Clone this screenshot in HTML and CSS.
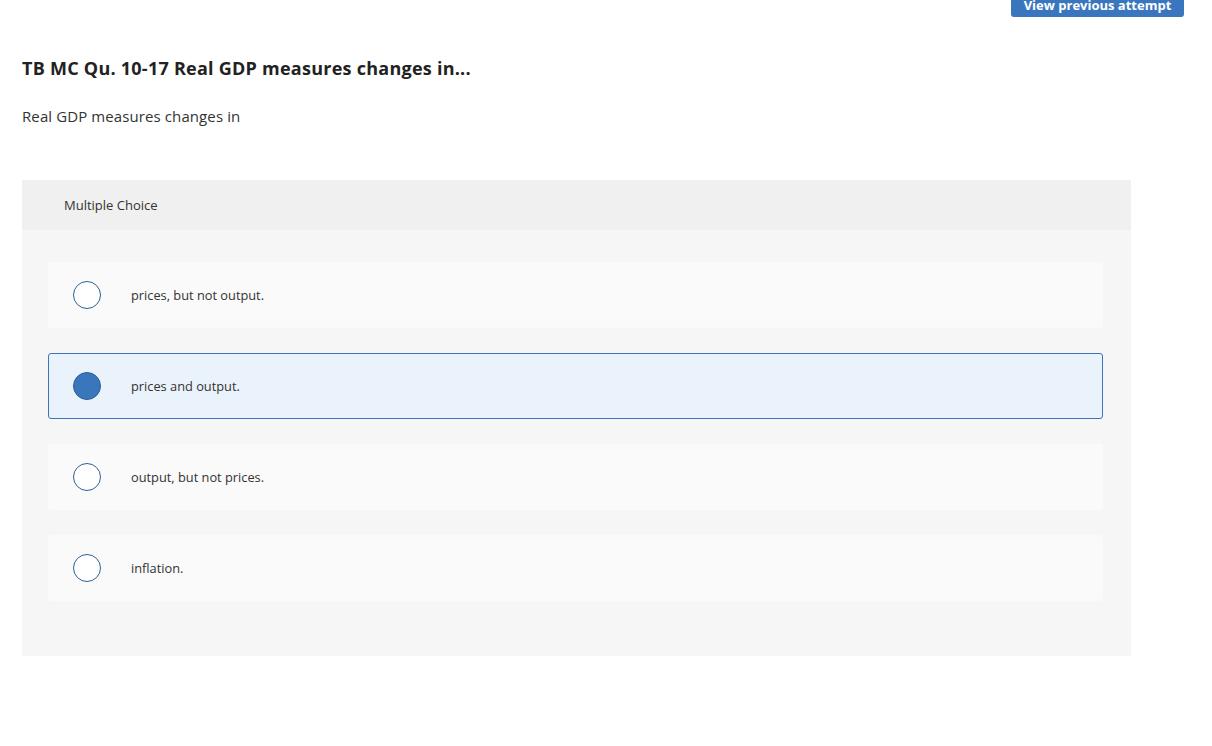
FILE: index.html
```html
<!DOCTYPE html>
<html>
<head>
<meta charset="utf-8">
<link rel="stylesheet" href="styles.css">
</head>
<body>
<div class="page">
  <div class="topbar">
    <button class="btn-prev">View previous attempt</button>
  </div>
  <h1 class="title">TB MC Qu. 10-17 Real GDP measures changes in...</h1>
  <p class="prompt">Real GDP measures changes in</p>
  <div class="panel">
    <div class="panel-head">Multiple Choice</div>
    <div class="panel-body">
      <div class="option"><span class="radio"></span><span class="label">prices, but not output.</span></div>
      <div class="option selected"><span class="radio"></span><span class="label">prices and output.</span></div>
      <div class="option"><span class="radio"></span><span class="label">output, but not prices.</span></div>
      <div class="option"><span class="radio"></span><span class="label">inflation.</span></div>
    </div>
  </div>
</div>
</body>
</html>
```
FILE: styles.css
```css
* { box-sizing: border-box; }
html, body { margin: 0; padding: 0; background: #fff; }
body { font-family: "Open Sans", "Liberation Sans", sans-serif; color: #333; }
.page { padding: 0 28px 0 22px; width: 1212px; }
.topbar { display: flex; justify-content: flex-end; align-items: flex-end; height: 17px; overflow: hidden; }
.btn-prev {
  flex: none;
  width: 173px; height: 33px;
  background: #3a76bd; color: #fff; border: none; border-radius: 3px;
  font-family: "Open Sans", "Liberation Sans", sans-serif; font-weight: 700; font-size: 13px;
  padding: 9px 0 0 0; line-height: 18px; display: block;
}
.title { margin: 39px 0 0 0; font-size: 18px; font-weight: 700; color: #222; line-height: 24px; letter-spacing: 0.25px; }
.prompt { margin: 26px 0 0 0; font-size: 15px; line-height: 20px; color: #333; letter-spacing: 0.1px; }
.panel { margin-top: 54px; width: 1109px; background: #f6f6f6; }
.panel-head { height: 50px; background: #f0f0f0; padding-left: 42px; display: flex; align-items: center; font-size: 13px; color: #333; }
.panel-body { padding: 32px 28px 55px 26px; display: flex; flex-direction: column; gap: 25px; }
.option { height: 66px; background: #fafafa; border-radius: 3px; display: flex; align-items: center; padding-left: 24px; border: 1px solid transparent; }
.option.selected { background: #eaf2fb; border-color: #3a76bd; }
.radio { width: 28px; height: 28px; border-radius: 50%; border: 1.5px solid #2e5f94; background: #fff; flex: none; }
.selected .radio { background: #3a76bc; border-color: #2e5f94; }
.label { margin-left: 30px; font-size: 12.8px; color: #333; }
```
